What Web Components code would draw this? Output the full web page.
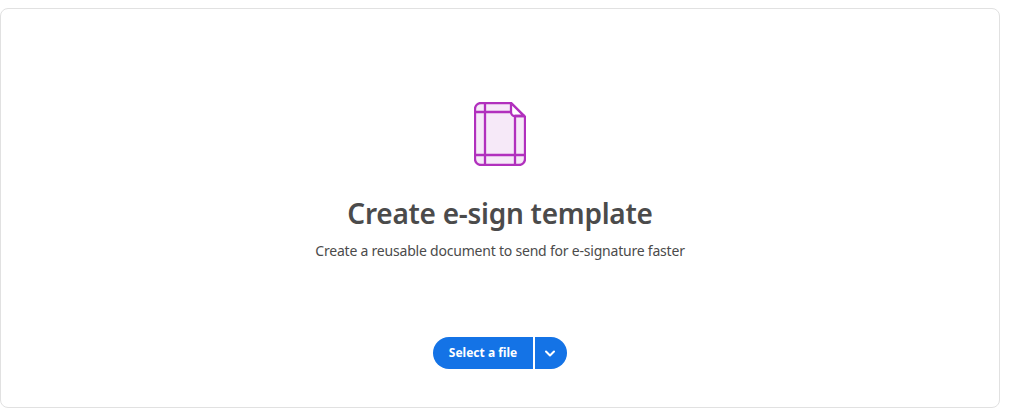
<!DOCTYPE html>
<html lang="en">
<head>
<meta charset="utf-8">
<title>Create e-sign template</title>
<style>
  html, body { margin: 0; background: #fff; }
  body { padding: 8px 26px 0 0; font-family: "Noto Sans", "Open Sans", sans-serif; }
</style>
</head>
<body>
<template-card>
  <doc-icon slot="icon"></doc-icon>
  <span slot="title">Create e-sign template</span>
  <span slot="subtitle">Create a reusable document to send for e-signature faster</span>
  <split-button slot="action">Select a file</split-button>
</template-card>

<script>
const cardTemplate = document.createElement("template");
cardTemplate.innerHTML = `
<style>
  :host {
    display: flex;
    flex-direction: column;
    align-items: center;
    box-sizing: border-box;
    height: 400px;
    padding-top: 93px;
    border: 1px solid #e1e1e1;
    border-radius: 8px;
    background: #fff;
  }
  h1 {
    margin: 28px 0 0;
    font-size: 28px;
    line-height: 38px;
    font-weight: 600;
    letter-spacing: -0.27px;
    color: #4b4b4b;
  }
  p {
    margin: 9px 0 0;
    font-size: 14px;
    line-height: 20px;
    letter-spacing: -0.21px;
    color: #4b4b4b;
  }
  .action { margin-top: 76px; }
</style>
<slot name="icon"></slot>
<h1><slot name="title"></slot></h1>
<p><slot name="subtitle"></slot></p>
<div class="action"><slot name="action"></slot></div>
`;

class TemplateCard extends HTMLElement {
  constructor() {
    super();
    this.attachShadow({ mode: "open" }).appendChild(cardTemplate.content.cloneNode(true));
  }
}

const iconTemplate = document.createElement("template");
iconTemplate.innerHTML = `
<style>
  :host { display: block; width: 52px; height: 64px; }
  svg { display: block; }
</style>
<svg width="52" height="64" viewBox="0 0 52 64" fill="none" stroke="#b130bd" stroke-width="2.3">
  <path fill="#f6e9f8" d="M7 1H37L51 15V57a6 6 0 0 1-6 6H7a6 6 0 0 1-6-6V7a6 6 0 0 1 6-6Z"/>
  <path fill="#fff" d="M37 1V10a4 4 0 0 0 4 4H50Z"/>
  <path d="M1 10H37M41 14H51M1 53H51M11 1V63M41 14V63"/>
</svg>
`;

class DocIcon extends HTMLElement {
  constructor() {
    super();
    this.attachShadow({ mode: "open" }).appendChild(iconTemplate.content.cloneNode(true));
  }
}

const buttonTemplate = document.createElement("template");
buttonTemplate.innerHTML = `
<style>
  :host { display: inline-flex; gap: 2px; }
  button {
    display: flex;
    align-items: center;
    justify-content: center;
    box-sizing: border-box;
    height: 32px;
    border: 0;
    margin: 0;
    padding: 0;
    background: #1473e6;
    color: #fff;
    font: 700 12px "Noto Sans", "Open Sans", sans-serif;
  }
  .main { width: 100px; padding-bottom: 2px; border-radius: 16px 0 0 16px; }
  .more { width: 32px; padding-right: 2px; border-radius: 0 16px 16px 0; }
</style>
<button class="main" type="button"><slot></slot></button>
<button class="more" type="button" aria-label="More">
  <svg width="10" height="7" viewBox="0 0 10 7" fill="none" stroke="#fff" stroke-width="2" stroke-linecap="round" stroke-linejoin="round">
    <path d="M1 1.5L5 5.5L9 1.5"/>
  </svg>
</button>
`;

class SplitButton extends HTMLElement {
  constructor() {
    super();
    this.attachShadow({ mode: "open" }).appendChild(buttonTemplate.content.cloneNode(true));
  }
}

customElements.define("template-card", TemplateCard);
customElements.define("doc-icon", DocIcon);
customElements.define("split-button", SplitButton);
</script>
</body>
</html>
